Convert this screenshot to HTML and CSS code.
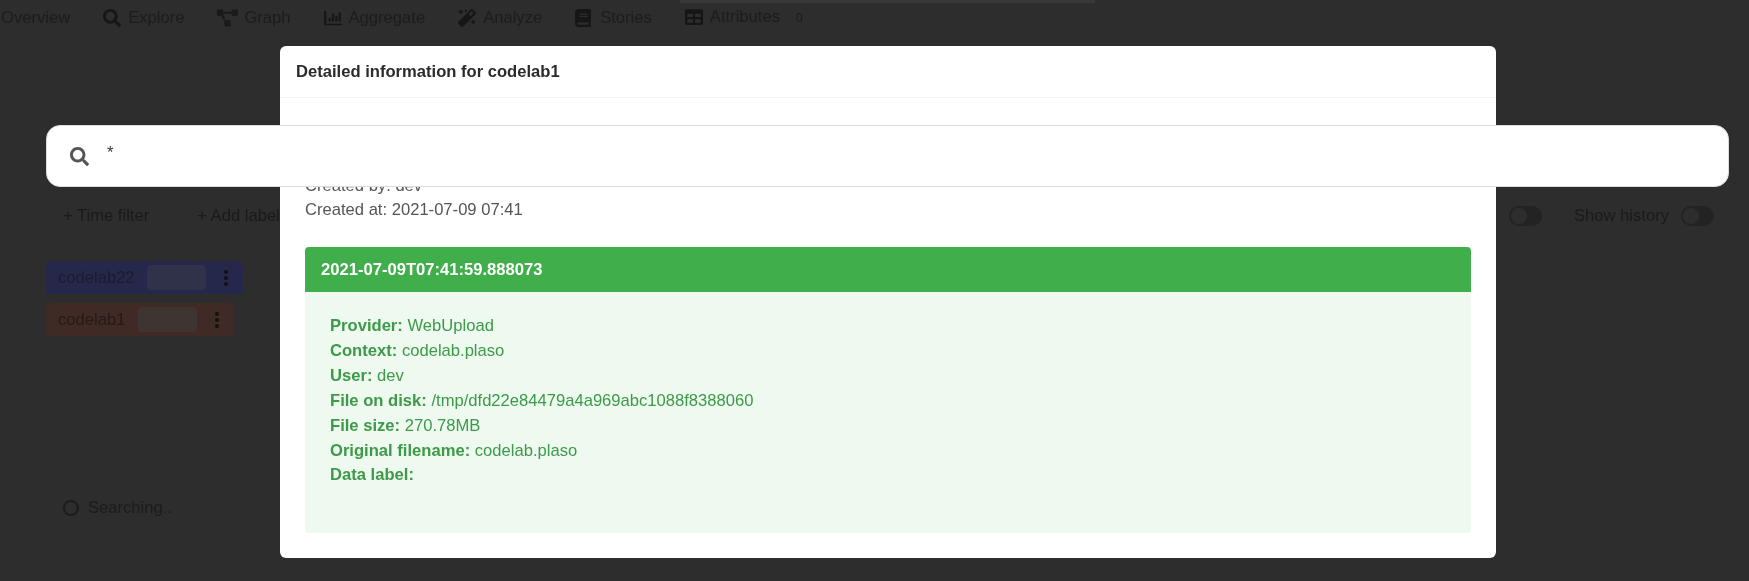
FILE: index.html
```html
<!DOCTYPE html>
<html lang="en">
<head>
<meta charset="utf-8">
<title>Timesketch - Explore</title>
<link rel="stylesheet" href="styles.css">
</head>
<body>
<div class="page">
  <div class="top-strip"></div>
  <nav class="nav">
    <a class="nav-item">Overview</a>
    <a class="nav-item"><svg class="nav-icon" viewBox="0 0 512 512"><path d="M505 442.700 405.300 343c-4.500-4.500-10.600-7-17-7H372c27.600-35.300 44-79.700 44-128C416 93.100 322.900 0 208 0S0 93.100 0 208s93.100 208 208 208c48.300 0 92.700-16.400 128-44v16.300c0 6.400 2.500 12.500 7 17l99.700 99.700c9.400 9.400 24.600 9.400 33.900 0l28.300-28.300c9.400-9.400 9.400-24.600.1-34zM208 336c-70.700 0-128-57.200-128-128 0-70.700 57.200-128 128-128 70.700 0 128 57.200 128 128 0 70.700-57.200 128-128 128z"/></svg>Explore</a>
    <a class="nav-item nav-item-wide"><svg class="nav-icon-wide" viewBox="0 0 640 512"><path d="M384 320H256c-17.700 0-32 14.300-32 32v128c0 17.700 14.300 32 32 32h128c17.700 0 32-14.300 32-32V352c0-17.700-14.300-32-32-32zM192 32c0-17.700-14.300-32-32-32H32C14.300 0 0 14.300 0 32v128c0 17.700 14.300 32 32 32h95.700l73.200 128c11-19 31.400-32 55.100-32h.3L192 145.500V128h256V64H192V32zM608 0H480c-17.700 0-32 14.300-32 32v128c0 17.700 14.300 32 32 32h128c17.700 0 32-14.300 32-32V32c0-17.700-14.300-32-32-32z"/></svg>Graph</a>
    <a class="nav-item"><svg class="nav-icon" viewBox="0 0 512 448"><path d="M332.800 320h38.400c6.400 0 12.800-6.400 12.800-12.800V172.800c0-6.400-6.400-12.800-12.800-12.800h-38.400c-6.400 0-12.800 6.400-12.800 12.800v134.400c0 6.400 6.400 12.800 12.800 12.800zm96 0h38.400c6.400 0 12.800-6.400 12.800-12.800V76.800c0-6.400-6.400-12.800-12.800-12.800h-38.400c-6.400 0-12.800 6.400-12.800 12.800v230.400c0 6.400 6.400 12.800 12.800 12.800zm-288 0h38.400c6.400 0 12.800-6.400 12.800-12.800v-70.400c0-6.400-6.400-12.800-12.800-12.800h-38.400c-6.400 0-12.800 6.400-12.800 12.800v70.400c0 6.400 6.400 12.800 12.800 12.800zm96 0h38.400c6.400 0 12.800-6.400 12.800-12.800V108.800c0-6.400-6.400-12.800-12.800-12.800h-38.400c-6.400 0-12.800 6.400-12.800 12.800v198.400c0 6.400 6.400 12.800 12.800 12.800zM496 384H64V48c0-8.800-7.200-16-16-16H16C7.200 32 0 39.200 0 48v352c0 17.700 14.300 32 32 32h464c8.800 0 16-7.200 16-16v-16c0-8.800-7.200-16-16-16z"/></svg>Aggregate</a>
    <a class="nav-item"><svg class="nav-icon" viewBox="0 0 512 512"><path d="M224 96l16-32 32-16-32-16-16-32-16 32-32 16 32 16 16 32zM80 160l26.700-53.300L160 80l-53.300-26.700L80 0 53.300 53.300 0 80l53.300 26.700L80 160zm352 128l-26.700 53.300L352 368l53.300 26.700L432 448l26.700-53.300L512 368l-53.300-26.700L432 288zm70.600-193.800L417.800 9.400C411.500 3.100 403.300 0 395.200 0c-8.200 0-16.400 3.100-22.600 9.400L9.400 372.500c-12.500 12.500-12.500 32.800 0 45.300l84.900 84.900c6.200 6.200 14.400 9.400 22.600 9.400 8.200 0 16.400-3.100 22.600-9.400l363.100-363.200c12.500-12.400 12.500-32.700 0-45.200zM359.500 203.500l-50.900-50.900 86.600-86.600 50.900 50.900-86.600 86.600z"/></svg>Analyze</a>
    <a class="nav-item"><svg class="nav-icon nav-icon-book" viewBox="0 0 448 512"><path d="M448 360V24c0-13.300-10.700-24-24-24H96C43 0 0 43 0 96v320c0 53 43 96 96 96h328c13.300 0 24-10.700 24-24v-16c0-7.500-3.500-14.300-8.900-18.700-4.200-15.400-4.200-59.300 0-74.700 5.400-4.300 8.900-11.100 8.900-18.600zM128 134c0-3.300 2.700-6 6-6h212c3.300 0 6 2.700 6 6v20c0 3.300-2.700 6-6 6H134c-3.300 0-6-2.700-6-6v-20zm0 64c0-3.300 2.700-6 6-6h212c3.300 0 6 2.700 6 6v20c0 3.300-2.700 6-6 6H134c-3.300 0-6-2.700-6-6v-20zm253.400 250H96c-17.700 0-32-14.300-32-32 0-17.600 14.400-32 32-32h285.400c-1.900 17.100-1.900 46.900 0 64z"/></svg>Stories</a>
    <a class="nav-item nav-item-raised"><svg class="nav-icon nav-icon-table" viewBox="0 0 512 448"><path d="M464 0H48C21.500 0 0 21.500 0 48v352c0 26.500 21.500 48 48 48h416c26.500 0 48-21.500 48-48V48c0-26.500-21.500-48-48-48zM224 384H64v-96h160v96zm0-160H64v-96h160v96zm224 160H288v-96h160v96zm0-160H288v-96h160v96z"/></svg>Attributes<span class="nav-count">0</span></a>
  </nav>

  <main class="explore">
    <div class="toolbar">
      <div class="filters">
        <span>+ Time filter</span>
        <span>+ Add label filter</span>
      </div>
      <div class="switches">
        <span class="switch"></span>
        <span class="switch-label">Show history</span>
        <span class="switch"></span>
      </div>
    </div>

    <div class="chips">
      <div class="chip chip-blue">
        <span class="chip-name">codelab22</span>
        <span class="chip-count"></span>
        <span class="chip-menu"><i></i><i></i><i></i></span>
      </div>
      <div class="chip chip-red">
        <span class="chip-name">codelab1</span>
        <span class="chip-count"></span>
        <span class="chip-menu"><i></i><i></i><i></i></span>
      </div>
    </div>

    <div class="searching"><span class="spinner"></span>Searching..</div>
  </main>

  <section class="modal">
    <header class="modal-title">Detailed information for codelab1</header>
    <div class="modal-body">
      <p class="meta">Created by: dev</p>
      <p class="meta">Created at: 2021-07-09 07:41</p>
      <article class="alert">
        <h2 class="alert-head">2021-07-09T07:41:59.888073</h2>
        <div class="alert-body">
          <div><b>Provider:</b> WebUpload</div>
          <div><b>Context:</b> codelab.plaso</div>
          <div><b>User:</b> dev</div>
          <div><b>File on disk:</b> /tmp/dfd22e84479a4a969abc1088f8388060</div>
          <div><b>File size:</b> 270.78MB</div>
          <div><b>Original filename:</b> codelab.plaso</div>
          <div><b>Data label:</b></div>
        </div>
      </article>
    </div>
  </section>

  <div class="searchbar">
    <svg class="searchbar-icon" viewBox="0 0 512 512"><path d="M505 442.700 405.300 343c-4.500-4.500-10.600-7-17-7H372c27.600-35.300 44-79.700 44-128C416 93.100 322.900 0 208 0S0 93.100 0 208s93.100 208 208 208c48.300 0 92.700-16.400 128-44v16.300c0 6.400 2.500 12.500 7 17l99.700 99.700c9.400 9.400 24.600 9.400 33.900 0l28.300-28.300c9.400-9.400 9.400-24.600.1-34zM208 336c-70.700 0-128-57.200-128-128 0-70.700 57.200-128 128-128 70.700 0 128 57.200 128 128 0 70.700-57.200 128-128 128z"/></svg>
    <span class="searchbar-query">*</span>
  </div>
</div>
</body>
</html>
```

FILE: styles.css
```css
* { box-sizing: border-box; }

html, body {
  margin: 0;
  padding: 0;
  height: 100%;
  background: #2d2d2d;
}

.page {
  position: relative;
  width: 1749px;
  height: 581px;
  overflow: hidden;
  background: #2d2d2d;
  color: #1a1a1a;
  font-family: "Liberation Sans", Arial, sans-serif;
  font-size: 16.6px;
  filter: blur(0.35px);
}

.top-strip {
  position: absolute;
  top: 0;
  left: 680px;
  width: 415px;
  height: 3px;
  background: #383838;
}

.nav {
  display: flex;
  align-items: center;
  gap: 33px;
  height: 36px;
  padding-left: 1px;
}

.nav-item {
  display: flex;
  align-items: center;
  color: #1c1c1c;
}

.nav-icon {
  width: 18px;
  height: 18px;
  margin-right: 7px;
  fill: #161616;
}

.nav-icon-wide {
  width: 21px;
  height: 18px;
  margin-right: 6px;
  fill: #1a1a1a;
}

.nav-icon-book { width: 16px; margin-right: 9px; }
.nav-icon-table { margin-right: 7px; }

.nav-item-raised { position: relative; top: -1px; }

.nav-count {
  margin-left: 16px;
  font-size: 12px;
  position: relative;
  top: 1px;
}

.explore { padding: 0 35px 0 46px; }

.toolbar {
  display: flex;
  align-items: center;
  justify-content: space-between;
  height: 24px;
  margin-top: 168px;
}

.filters {
  display: flex;
  gap: 48px;
  padding-left: 17px;
}

.switches {
  display: flex;
  align-items: center;
}

.switch {
  display: block;
  width: 33px;
  height: 20px;
  border-radius: 10px;
  background: #232323;
  position: relative;
}

.switch::before {
  content: "";
  position: absolute;
  left: 2px;
  top: 2px;
  width: 16px;
  height: 16px;
  border-radius: 50%;
  background: #2d2d2d;
}

.switch-label {
  margin: 0 12px 0 32px;
}

.chips {
  display: flex;
  flex-direction: column;
  align-items: flex-start;
  gap: 9px;
  margin-top: 33px;
}

.chip {
  display: flex;
  align-items: center;
  height: 33px;
  border-radius: 4px;
  padding: 0 0 0 12px;
}

.chip-blue { width: 197px; background: #25284a; }
.chip-red { width: 188px; background: #3f2a26; }

.chip-blue .chip-name { width: 89px; color: #1b1c30; }
.chip-red .chip-name { width: 80px; color: #241a18; }

.chip-count {
  width: 59px;
  height: 25px;
  border-radius: 4px;
}

.chip-blue .chip-count { background: #2f3248; }
.chip-red .chip-count { background: #3e3532; }

.chip-menu {
  display: flex;
  flex-direction: column;
  gap: 2px;
  margin-left: 18px;
}

.chip-menu i {
  display: block;
  width: 4px;
  height: 4px;
  border-radius: 50%;
  background: #111;
}

.searching {
  display: flex;
  align-items: center;
  margin-top: 162px;
  margin-left: 17px;
  color: #1c1c1c;
}

.spinner {
  width: 16px;
  height: 16px;
  margin-right: 9px;
  border: 2px solid #1c1c1c;
  border-radius: 50%;
}

.modal {
  position: absolute;
  left: 280px;
  top: 46px;
  width: 1216px;
  height: 512px;
  background: #fff;
  border-radius: 6px;
  color: #555;
  display: flex;
  flex-direction: column;
}

.modal-title {
  height: 52px;
  padding: 0 16px;
  display: flex;
  align-items: center;
  border-bottom: 1px solid #f5f5f5;
  font-weight: 700;
  color: #2b2b2b;
}

.modal-body { padding: 76px 25px 0; }

.meta {
  margin: 0;
  line-height: 24px;
}

.alert {
  margin-top: 25px;
  border-radius: 4px;
  overflow: hidden;
}

.alert-head {
  margin: 0;
  height: 45px;
  padding: 0 16px;
  display: flex;
  align-items: center;
  background: #41ae4c;
  color: #fff;
  font-size: 16.6px;
  font-weight: 700;
}

.alert-body {
  height: 241px;
  padding: 22px 25px;
  background: #eef9f0;
  color: #3c9a48;
  line-height: 24.9px;
}

.searchbar {
  position: absolute;
  left: 46px;
  top: 125px;
  width: 1683px;
  height: 62px;
  background: #fff;
  border: 1px solid #dcdcdc;
  border-radius: 14px;
  display: flex;
  align-items: center;
  padding-left: 23px;
}

.searchbar-icon {
  width: 19px;
  height: 19px;
  fill: #555;
}

.searchbar-query {
  margin-left: 18px;
  color: #363636;
  font-size: 16.6px;
  position: relative;
  top: -3px;
}
```
